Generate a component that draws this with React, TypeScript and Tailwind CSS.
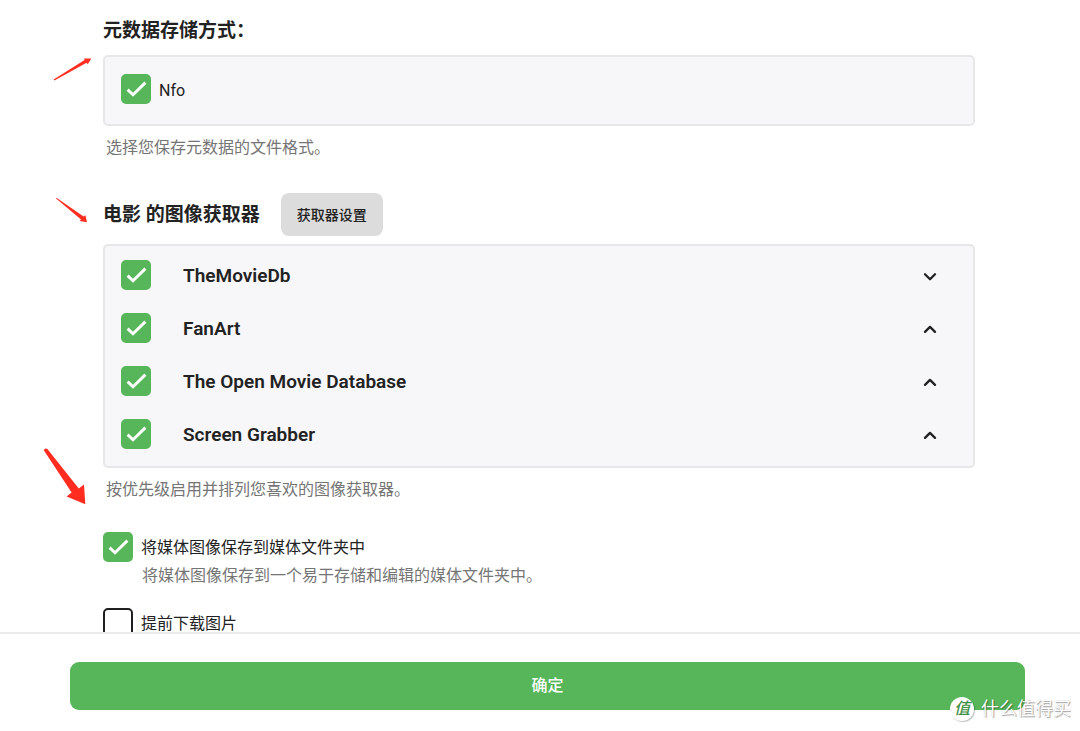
import type { ReactNode } from "react";

function Checkbox({ id, defaultChecked = true }: { id: string; defaultChecked?: boolean }) {
  return (
    <span className="grid shrink-0 *:col-start-1 *:row-start-1">
      <input
        id={id}
        type="checkbox"
        defaultChecked={defaultChecked}
        className="peer size-[30px] appearance-none rounded-[5px] border-2 border-[#1f1f1f] bg-white checked:border-[#57b659] checked:bg-[#57b659]"
      />
      <svg
        viewBox="0 0 30 30"
        aria-hidden="true"
        className="pointer-events-none hidden size-[30px] peer-checked:block"
        fill="none"
        stroke="#fff"
        strokeWidth="2.9"
      >
        <path d="M6.6 15.6 12 20.8 24.4 8.6" />
      </svg>
    </span>
  );
}

function Chevron({ open }: { open: boolean }) {
  return (
    <svg
      viewBox="0 0 24 24"
      className="size-6"
      fill="none"
      stroke="#222"
      strokeWidth="2.3"
      strokeLinecap="round"
      strokeLinejoin="round"
      aria-hidden="true"
    >
      {open ? <path d="M7 11.2 12 16.2 17 11.2" /> : <path d="M7 15.9 12 10.9 17 15.9" />}
    </svg>
  );
}

function Panel({ children, className }: { children: ReactNode; className: string }) {
  return <div className={`rounded-[5px] border-2 border-[#e7e7e8] bg-[#f7f7f9] px-4 ${className}`}>{children}</div>;
}

const fetchers = [
  { id: "tmdb", name: "TheMovieDb", open: true },
  { id: "fanart", name: "FanArt", open: false },
  { id: "omdb", name: "The Open Movie Database", open: false },
  { id: "grabber", name: "Screen Grabber", open: false },
];

export default function App() {
  return (
    <div className="relative flex h-screen flex-col overflow-hidden bg-white font-[Roboto,'Noto_Sans_CJK_SC',sans-serif] text-base leading-6 text-[#222]">
      <main className="min-h-0 flex-1 overflow-hidden pr-[105px] pl-[103px]">
        <section className="pt-[19px]">
          <h2 className="text-[19px] leading-6 font-semibold">元数据存储方式：</h2>
          <Panel className="mt-3 flex h-[71px] items-start pt-[17px]">
            <Checkbox id="nfo" />
            <label htmlFor="nfo" className="pt-[5px] pl-2">
              Nfo
            </label>
          </Panel>
          <p className="mt-[10px] pl-[3px] text-[#757575]">选择您保存元数据的文件格式。</p>
        </section>

        <section className="mt-[33px]">
          <div className="flex items-center gap-[21px]">
            <h2 className="text-[19px] leading-6 font-semibold">电影 的图像获取器</h2>
            <button type="button" className="h-[43px] rounded-lg bg-[#dcdcdc] px-4 text-sm font-medium">
              获取器设置
            </button>
          </div>
          <Panel className="mt-2 pt-0.5 pb-1.5">
            <ul>
              {fetchers.map((f) => (
                <li key={f.id} className="flex h-[53px] items-center">
                  <Checkbox id={f.id} />
                  <label htmlFor={f.id} className="flex-1 pt-0.5 pl-8 text-[19px] font-semibold">
                    {f.name}
                  </label>
                  <button type="button" aria-label={f.name} aria-expanded={f.open} className="mr-[15px]">
                    <Chevron open={f.open} />
                  </button>
                </li>
              ))}
            </ul>
          </Panel>
          <p className="mt-[10px] pl-[3px] text-[#757575]">按优先级启用并排列您喜欢的图像获取器。</p>
        </section>

        <section className="mt-[30px]">
          <div className="flex items-center">
            <Checkbox id="save-images" />
            <label htmlFor="save-images" className="pt-0.5 pl-2">
              将媒体图像保存到媒体文件夹中
            </label>
          </div>
          <p className="mt-0.5 pl-[39px] text-[#757575]">将媒体图像保存到一个易于存储和编辑的媒体文件夹中。</p>
          <div className="mt-5 flex items-center">
            <Checkbox id="prefetch" defaultChecked={false} />
            <label htmlFor="prefetch" className="pt-0.5 pl-2">
              提前下载图片
            </label>
          </div>
        </section>
      </main>

      <footer className="flex border-t-2 border-[#ebebeb] pt-7 pr-[55px] pb-[21px] pl-[70px]">
        <button type="submit" className="h-12 flex-1 rounded-[9px] bg-[#57b659] font-medium text-white">
          确定
        </button>
      </footer>

      <svg
        aria-hidden="true"
        viewBox="0 0 100 520"
        className="pointer-events-none absolute top-0 left-0 h-[520px] w-[100px]"
        fill="#ff2d20"
      >
        <path d="M53.6 79.4 84.6 60 84 58.6 91.3 58.4 87.8 64.3 86.6 62.8 54.4 80.4Z" />
        <path d="M55.8 198.3 56.8 198 83.6 216.6 85.4 215.2 87 222.3 79.6 221 81 219.6Z" />
        <path d="M43.8 450.2Q45 447.4 47.4 449L78.8 488.4 84 484.4 85.3 504.2 66.6 496.6 71.6 492.6Z" />
      </svg>

      <div className="pointer-events-none absolute right-[9px] bottom-[10px] flex items-center gap-[7px] leading-none">
        <span className="flex size-6 items-center justify-center rounded-full bg-white text-base font-medium text-[#3f8f45] italic shadow-[1px_1px_1px_rgba(0,0,0,0.25)]">
          值
        </span>
        <span className="text-lg leading-6 text-white [text-shadow:1px_1px_1px_rgba(0,0,0,0.35),0_0_1px_rgba(0,0,0,0.25)]">
          什么值得买
        </span>
      </div>
    </div>
  );
}
